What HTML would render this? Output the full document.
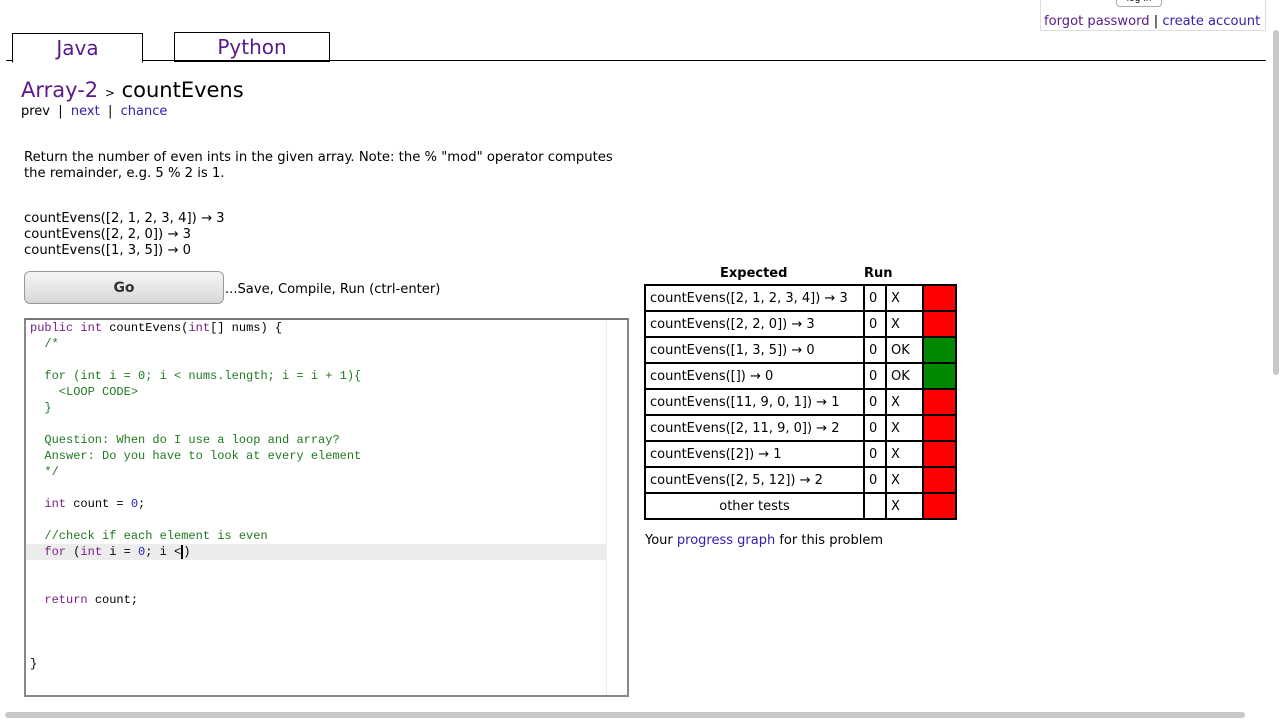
<!DOCTYPE html>
<html><head><meta charset="utf-8"><style>
body{margin:0;width:1280px;height:720px;background:#fff;font-family:"DejaVu Sans","Liberation Sans",sans-serif;position:relative;overflow:hidden;color:#000}
.a{position:absolute;white-space:nowrap}
.p{color:#5a1a8a}.b{color:#3322aa}
.code{font-family:"Liberation Mono",monospace;font-size:12px;line-height:16px}
.c{color:#1f7a1f}.k{color:#7a1f8a}.n{color:#2222cc}
table{border-collapse:collapse;font-size:13px}
td{border:2px solid #000;height:24px;padding:0 4px;box-sizing:border-box}
</style></head><body>
<div class="a" style="left:1040px;top:-8px;width:224px;height:38px;border:1px solid #ddd;border-top:none"></div>
<div class="a" style="left:1116px;top:-8px;width:44px;height:13px;border:1px solid #aaa;border-radius:4px;font-size:9px;text-align:center;line-height:12px">log in</div>
<div class="a" style="left:1044px;top:14px;font-size:13.1px"><span class="p">forgot password</span> | <span class="b">create account</span></div>
<div class="a" style="left:6px;top:60px;width:1260px;border-top:1px solid #000"></div>
<div class="a" style="left:12px;top:33px;width:129px;height:28px;border:1px solid #000;border-bottom:1px solid #fff;background:#fff;text-align:center;font-size:20px;line-height:28px" ><span class="p">Java</span></div>
<div class="a" style="left:174px;top:32px;width:154px;height:28px;border:1px solid #000;text-align:center;font-size:20px;line-height:28px"><span class="p">Python</span></div>
<div class="a" style="left:21px;top:78px;font-size:21px"><span class="p">Array-2</span> <span style="font-size:12px">&gt;</span> countEvens</div>
<div class="a" style="left:21px;top:104px;font-size:13px">prev &nbsp;| &nbsp;<span class="b">next</span> &nbsp;| &nbsp;<span class="b">chance</span></div>
<div class="a" style="left:24px;top:150px;font-size:13.2px;line-height:16px">Return the number of even ints in the given array. Note: the % "mod" operator computes<br>the remainder, e.g. 5 % 2 is 1.</div>
<div class="a" style="left:24px;top:211px;font-size:13.2px;line-height:16px">countEvens([2, 1, 2, 3, 4]) → 3<br>countEvens([2, 2, 0]) → 3<br>countEvens([1, 3, 5]) → 0</div>
<div class="a" style="left:24px;top:271px;width:198px;height:31px;border:1px solid #999;border-radius:6px;background:linear-gradient(#f6f6f6,#d8d8d8);text-align:center;font-weight:bold;font-size:14px;line-height:33px;color:#333">Go</div>
<div class="a" style="left:225px;top:282px;font-size:13.1px">...Save, Compile, Run (ctrl-enter)</div>
<div class="a" style="left:24px;top:318px;width:601px;height:375px;border:2px solid #888;border-top-color:#777"></div>
<div class="a" style="left:606px;top:320px;width:1px;height:375px;background:#eee"></div>
<div class="a" style="left:26px;top:544px;width:580px;height:16px;background:#ececec"></div>
<div class="a code" style="left:30px;top:320px"><span class="k">public</span> <span class="k">int</span> countEvens(<span class="k">int</span>[] nums) {
<br><span class="c">&nbsp;&nbsp;/*</span><br><br>
<span class="c">&nbsp;&nbsp;for (int i = 0; i &lt; nums.length; i = i + 1){</span><br>
<span class="c">&nbsp;&nbsp;&nbsp;&nbsp;&lt;LOOP CODE&gt;</span><br>
<span class="c">&nbsp;&nbsp;}</span><br><br>
<span class="c">&nbsp;&nbsp;Question: When do I use a loop and array?</span><br>
<span class="c">&nbsp;&nbsp;Answer: Do you have to look at every element</span><br>
<span class="c">&nbsp;&nbsp;*/</span><br><br>
&nbsp;&nbsp;<span class="k">int</span> count = <span class="n">0</span>;<br><br>
<span class="c">&nbsp;&nbsp;//check if each element is even</span><br>
&nbsp;&nbsp;<span class="k">for</span> (<span class="k">int</span> i = <span class="n">0</span>; i &lt;<span style="border-left:2px solid #000">)</span><br><br><br>
&nbsp;&nbsp;<span class="k">return</span> count;<br><br><br><br>}</div>
<div class="a" style="left:720px;top:266px;font-size:13px;font-weight:bold">Expected</div>
<div class="a" style="left:864px;top:266px;font-size:13px;font-weight:bold">Run</div>
<table class="a" style="left:644px;top:284px">
<tr><td style="width:219px;height:26px">countEvens([2, 1, 2, 3, 4]) → 3</td><td style="width:22px">0</td><td style="width:37px">X</td><td style="width:33px;background:#f00"></td></tr>
<tr><td style="height:26px">countEvens([2, 2, 0]) → 3</td><td>0</td><td>X</td><td style="background:#f00"></td></tr>
<tr><td style="height:26px">countEvens([1, 3, 5]) → 0</td><td>0</td><td>OK</td><td style="background:#080"></td></tr>
<tr><td style="height:26px">countEvens([]) → 0</td><td>0</td><td>OK</td><td style="background:#080"></td></tr>
<tr><td style="height:26px">countEvens([11, 9, 0, 1]) → 1</td><td>0</td><td>X</td><td style="background:#f00"></td></tr>
<tr><td style="height:26px">countEvens([2, 11, 9, 0]) → 2</td><td>0</td><td>X</td><td style="background:#f00"></td></tr>
<tr><td style="height:26px">countEvens([2]) → 1</td><td>0</td><td>X</td><td style="background:#f00"></td></tr>
<tr><td style="height:26px">countEvens([2, 5, 12]) → 2</td><td>0</td><td>X</td><td style="background:#f00"></td></tr>
<tr><td style="height:26px;text-align:center">other tests</td><td></td><td>X</td><td style="background:#f00"></td></tr>
</table>
<div class="a" style="left:645px;top:533px;font-size:13px">Your <span class="b">progress graph</span> for this problem</div>
<div class="a" style="left:1273px;top:30px;width:6px;height:345px;background:#c8c8c8;border-radius:3px"></div>
<div class="a" style="left:5px;top:712px;width:1240px;height:6px;background:#c8c8c8;border-radius:3px"></div>
</body></html>
